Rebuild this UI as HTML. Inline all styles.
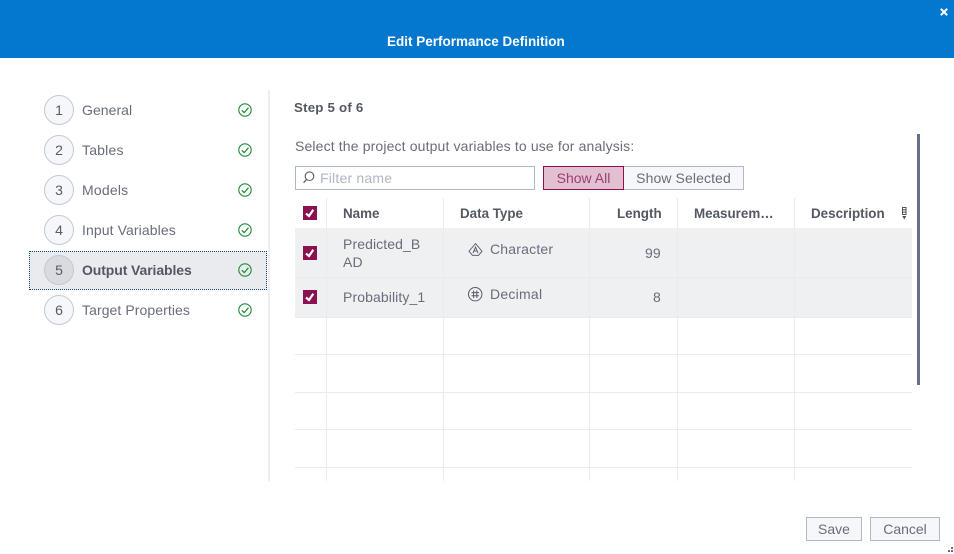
<!DOCTYPE html>
<html><head><meta charset="utf-8"><style>
html,body{margin:0;padding:0;width:954px;height:554px;overflow:hidden;background:#fff}
body{position:relative;font-family:"Liberation Sans",sans-serif;font-size:14px;color:#686d79}
.a{position:absolute;white-space:nowrap}
.t{position:absolute;white-space:nowrap;line-height:18px;height:18px}
.c{position:absolute;left:44px;width:28px;height:28px;border:1px solid #c3c8d2;border-radius:50%;background:#f6f7fa;text-align:center;line-height:28px;color:#565b66;font-size:14px}
.hl{position:absolute;left:295px;width:617px;height:1px;background:#ebebeb}
.vl{position:absolute;width:1px;background:#ebebeb}
.th{position:absolute;top:205px;line-height:18px;font-weight:bold;color:#535863;font-size:13.4px;white-space:nowrap}
.cb{position:absolute;left:303px;width:14px;height:14px;background:#8b1150}
.btn{position:absolute;box-sizing:border-box;border:1px solid #b0b8c8;background:#f6f7fa;text-align:center;height:24px;line-height:22px;color:#686d79}
svg{position:absolute;overflow:visible}
</style></head><body>
<div class="a" style="left:0;top:0;width:954px;height:58px;background:#0478cf"></div>
<div class="t" style="left:387px;top:33px;color:#fff;font-weight:bold;font-size:13.5px">Edit Performance Definition</div>
<svg style="left:940px;top:8px" width="8" height="8"><path d="M0.8 0.8L7.2 7.2M7.2 0.8L0.8 7.2" stroke="#fff" stroke-width="2"/></svg>

<div class="a" style="left:268px;top:90px;width:2px;height:391px;background:#eceef0"></div>
<div class="a" style="left:29px;top:251px;width:236px;height:37px;background:#eaebef;border:1px dotted #0b4a6e"></div>

<div class="c" style="top:95px">1</div>
<div class="c" style="top:135px">2</div>
<div class="c" style="top:175px">3</div>
<div class="c" style="top:215px">4</div>
<div class="c" style="top:255px;background:#d9dbe1">5</div>
<div class="c" style="top:295px">6</div>

<div class="t" style="left:82px;top:101px;letter-spacing:.05px">General</div>
<div class="t" style="left:82px;top:141px;letter-spacing:.2px">Tables</div>
<div class="t" style="left:82px;top:181px;letter-spacing:.2px">Models</div>
<div class="t" style="left:82px;top:221px;letter-spacing:.1px">Input Variables</div>
<div class="t" style="left:82px;top:261px;font-weight:bold;color:#535863;letter-spacing:-.1px">Output Variables</div>
<div class="t" style="left:82px;top:301px;letter-spacing:.08px">Target Properties</div>

<svg style="left:238px;top:103px" width="14" height="14"><circle cx="7" cy="7" r="6.2" fill="none" stroke="#1a8c34" stroke-width="1.1"/><path d="M3.8 7.2L6.2 9.6L10.4 4.8" fill="none" stroke="#1a8c34" stroke-width="1.2"/></svg>
<svg style="left:238px;top:143px" width="14" height="14"><circle cx="7" cy="7" r="6.2" fill="none" stroke="#1a8c34" stroke-width="1.1"/><path d="M3.8 7.2L6.2 9.6L10.4 4.8" fill="none" stroke="#1a8c34" stroke-width="1.2"/></svg>
<svg style="left:238px;top:183px" width="14" height="14"><circle cx="7" cy="7" r="6.2" fill="none" stroke="#1a8c34" stroke-width="1.1"/><path d="M3.8 7.2L6.2 9.6L10.4 4.8" fill="none" stroke="#1a8c34" stroke-width="1.2"/></svg>
<svg style="left:238px;top:223px" width="14" height="14"><circle cx="7" cy="7" r="6.2" fill="none" stroke="#1a8c34" stroke-width="1.1"/><path d="M3.8 7.2L6.2 9.6L10.4 4.8" fill="none" stroke="#1a8c34" stroke-width="1.2"/></svg>
<svg style="left:238px;top:263px" width="14" height="14"><circle cx="7" cy="7" r="6.2" fill="none" stroke="#1a8c34" stroke-width="1.1"/><path d="M3.8 7.2L6.2 9.6L10.4 4.8" fill="none" stroke="#1a8c34" stroke-width="1.2"/></svg>
<svg style="left:238px;top:303px" width="14" height="14"><circle cx="7" cy="7" r="6.2" fill="none" stroke="#1a8c34" stroke-width="1.1"/><path d="M3.8 7.2L6.2 9.6L10.4 4.8" fill="none" stroke="#1a8c34" stroke-width="1.2"/></svg>

<div class="t" style="left:294px;top:99px;font-weight:bold;color:#535863;font-size:13.3px;letter-spacing:.2px">Step 5 of 6</div>
<div class="t" style="left:295px;top:137px;letter-spacing:.14px">Select the project output variables to use for analysis:</div>

<div class="btn" style="left:295px;top:166px;width:240px;background:#fff"></div>
<svg style="left:303px;top:171px" width="12" height="12"><circle cx="6.5" cy="5.2" r="4.3" fill="none" stroke="#565b66" stroke-width="1.1"/><path d="M3.5 8.4L.6 11.8" stroke="#565b66" stroke-width="1.2"/></svg>
<div class="t" style="left:320px;top:169px;color:#b0b6c4;letter-spacing:.2px">Filter name</div>
<div class="btn" style="left:543px;top:166px;width:81px;background:#e3bfd2;border-color:#8b1150;color:#98406f">Show All</div>
<div class="btn" style="left:624px;top:166px;width:120px;border-left:0;letter-spacing:.1px">Show Selected</div>

<div class="a" style="left:295px;top:228px;width:617px;height:90px;background:#eff0f2"></div>
<div class="hl" style="top:277px;background:#e9eaec"></div>
<div class="hl" style="top:317px"></div>
<div class="hl" style="top:354px"></div>
<div class="hl" style="top:392px"></div>
<div class="hl" style="top:429px"></div>
<div class="hl" style="top:467px"></div>
<div class="vl" style="left:326px;top:198px;height:283px"></div>
<div class="vl" style="left:443px;top:198px;height:283px"></div>
<div class="vl" style="left:589px;top:198px;height:283px"></div>
<div class="vl" style="left:677px;top:198px;height:283px"></div>
<div class="vl" style="left:794px;top:198px;height:283px"></div>

<div class="cb" style="top:206px"></div>
<div class="cb" style="top:246px"></div>
<div class="cb" style="top:290px"></div>
<svg style="left:303px;top:206px" width="14" height="14"><path d="M3 7.5L6 10L10.3 3.8" fill="none" stroke="#fff" stroke-width="2.2"/></svg>
<svg style="left:303px;top:246px" width="14" height="14"><path d="M3 7.5L6 10L10.3 3.8" fill="none" stroke="#fff" stroke-width="2.2"/></svg>
<svg style="left:303px;top:290px" width="14" height="14"><path d="M3 7.5L6 10L10.3 3.8" fill="none" stroke="#fff" stroke-width="2.2"/></svg>

<div class="th" style="left:343px">Name</div>
<div class="th" style="left:460px">Data Type</div>
<div class="th" style="left:617px">Length</div>
<div class="th" style="left:694px">Measurem…</div>
<div class="th" style="left:811px">Description</div>
<svg style="left:902px;top:207px" width="5" height="13"><path d="M.5 .5H4V7.5H.5ZM.5 2.8H4M.5 5.1H4" fill="none" stroke="#4b505b" stroke-width="1"/><path d="M.3 9H4.3L2.3 12.5Z" fill="#4b505b"/></svg>

<div class="t" style="left:343px;top:235px;letter-spacing:.1px">Predicted_B</div>
<div class="t" style="left:343px;top:253px;letter-spacing:.2px">AD</div>
<div class="t" style="left:343px;top:288px;letter-spacing:.1px">Probability_1</div>
<svg style="left:468px;top:243px" width="15" height="13"><path d="M7.5 .6L14 8.2L10.5 12.4H4.5L1 8.2Z" fill="none" stroke="#5f6470" stroke-width="1"/><path d="M5 10L7.5 4L10 10M5.9 8H9.1" fill="none" stroke="#5f6470" stroke-width="1"/></svg>
<div class="t" style="left:490px;top:240px;letter-spacing:.2px">Character</div>
<svg style="left:468px;top:287px" width="15" height="15"><circle cx="7.2" cy="7.2" r="6.7" fill="none" stroke="#565b66" stroke-width="1"/><path d="M5.6 3.5V11M8.8 3.5V11M3.5 5.6H11M3.5 8.8H11" stroke="#565b66" stroke-width="1"/></svg>
<div class="t" style="left:490px;top:285px;letter-spacing:.25px">Decimal</div>
<div class="t" style="left:645px;top:244px;letter-spacing:.1px">99</div>
<div class="t" style="left:653px;top:288px">8</div>

<div class="a" style="left:917px;top:134px;width:3px;height:251px;background:#66708a"></div>

<div class="btn" style="left:806px;top:517px;width:56px">Save</div>
<div class="btn" style="left:870px;top:517px;width:70px">Cancel</div>
<svg style="left:946px;top:547px" width="8" height="7"><path d="M5 0h2v2h-2zM2 3h2v2h-2zM5 3h2v2h-2z" fill="#6a6f7a"/></svg>
</body></html>
